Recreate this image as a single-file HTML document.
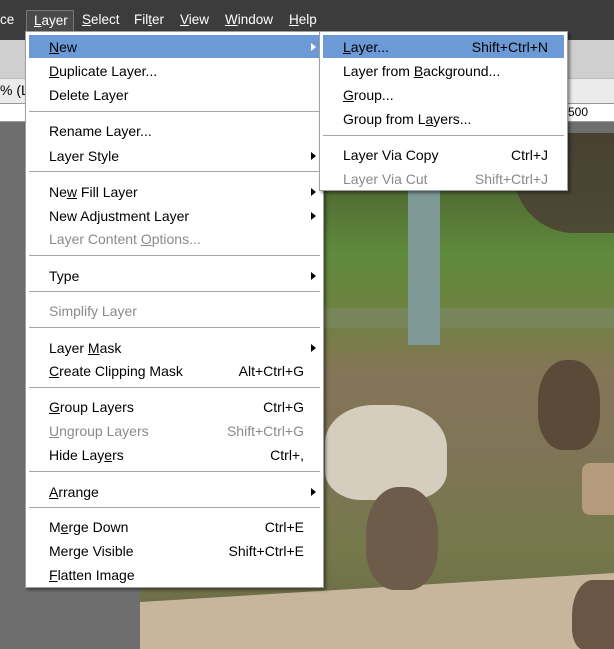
<!DOCTYPE html>
<html><head><meta charset="utf-8"><style>
*{margin:0;padding:0;box-sizing:border-box}
body{width:614px;height:649px;overflow:hidden;position:relative;background:#6e6e6e;font-family:"Liberation Sans",sans-serif;font-size:14px;color:#000}
.bar{position:absolute;left:0;top:0;width:614px;height:40px;background:#3c3c3c}
.bar span{position:absolute;top:12px;color:#fff;font-size:13.5px}
.bar .act{left:26px;top:10px;width:48px;height:23px;border:1px solid #777;border-bottom:none;background:#4a4a4a;padding:2px 0 0 7px}
u{text-decoration:underline}
.tool{position:absolute;left:0;top:40px;width:614px;height:38px;background:#cfcfcf}
.tool2{position:absolute;left:0;top:78px;width:614px;height:25px;background:#ebebeb;border-top:1px solid #bbb}
.ruler{position:absolute;left:0;top:103px;width:614px;height:19px;background:#fff;border-bottom:1px solid #999;border-top:1px solid #999}
.gap{position:absolute;left:0;top:122px;width:614px;height:11px;background:#6e6e6e}
.photo{position:absolute;left:140px;top:133px;width:474px;height:516px;overflow:hidden;
background:linear-gradient(180deg,#3e4a2c 0,#4f6a32 55px,#5f8a3c 120px,#6e8240 180px,#857558 240px,#7f7556 320px,#74784a 420px,#6e6e48 470px);}
.photo div{position:absolute}
.menu{position:absolute;background:#fff;border:1px solid #a0a0a0;box-shadow:2px 2px 3px rgba(0,0,0,.45)}
.it{position:absolute;left:3px;right:3px;height:23px;line-height:25px;padding-left:20px}
.it.hl{background:#6c9ad6}
.it.dis{color:#8a8a8a}
.it .sc{position:absolute;right:16px;top:0}
.it .ar{position:absolute;right:4px;top:8px;width:0;height:0;border-left:5px solid #000;border-top:4px solid transparent;border-bottom:4px solid transparent}
.it.hl .ar{border-left-color:#fff}
.sep{position:absolute;left:3px;right:3px;height:1px;background:#a5a5a5}
</style></head><body>
<div class="tool"></div><div class="tool2"><span style="position:absolute;left:0;top:3px;font-size:14px">% (L</span></div>
<div class="ruler"><span style="position:absolute;left:568px;top:1px;font-size:12px">500</span></div>
<div class="gap"></div>
<div class="photo">
<div style="left:374px;top:0;width:100px;height:100px;background:#4a4034;border-radius:0 0 0 60px;opacity:.85"></div>
<div style="left:0;top:175px;width:474px;height:20px;background:#7f8a70;opacity:.5"></div>
<div style="left:268px;top:57px;width:32px;height:155px;background:#7e9896"></div>
<div style="left:185px;top:272px;width:122px;height:95px;background:#d5cebf;border-radius:40% 45% 30% 30%"></div>
<div style="left:442px;top:330px;width:40px;height:52px;background:#b69a7c;border-radius:8px"></div>
<div style="left:398px;top:227px;width:62px;height:90px;background:#5c4a38;border-radius:45% 45% 40% 40%"></div>
<div style="left:0;top:0;width:474px;height:516px;background:#c7b59c;clip-path:polygon(0 469px,474px 440px,474px 516px,0 516px)"></div>
<div style="left:226px;top:354px;width:72px;height:103px;background:#6e5c4a;border-radius:45% 45% 40% 40%"></div>
<div style="left:432px;top:447px;width:42px;height:70px;background:#6a5644;border-radius:50% 0 0 30%"></div>
</div>
<div class="bar">
<span style="left:0">ce</span>
<span class="act"><u>L</u>ayer</span>
<span style="left:82px"><u>S</u>elect</span>
<span style="left:134px">Fil<u>t</u>er</span>
<span style="left:180px"><u>V</u>iew</span>
<span style="left:225px"><u>W</u>indow</span>
<span style="left:289px"><u>H</u>elp</span>
</div>

<div class="menu" style="left:25px;top:31px;width:299px;height:557px">
<div class="it hl" style="top:3px"><u>N</u>ew<i class="ar"></i></div>
<div class="it" style="top:27px"><u>D</u>uplicate Layer...</div>
<div class="it" style="top:51px">Delete Layer</div>
<div class="sep" style="top:79px"></div>
<div class="it" style="top:87px">Rename Layer...</div>
<div class="it" style="top:112px">Layer Style<i class="ar"></i></div>
<div class="sep" style="top:139px"></div>
<div class="it" style="top:148px">Ne<u>w</u> Fill Layer<i class="ar"></i></div>
<div class="it" style="top:172px">New Adjustment Layer<i class="ar"></i></div>
<div class="it dis" style="top:195px">Layer Content <u>O</u>ptions...</div>
<div class="sep" style="top:223px"></div>
<div class="it" style="top:232px">Type<i class="ar"></i></div>
<div class="sep" style="top:259px"></div>
<div class="it dis" style="top:267px">Simplify Layer</div>
<div class="sep" style="top:295px"></div>
<div class="it" style="top:304px">Layer <u>M</u>ask<i class="ar"></i></div>
<div class="it" style="top:327px"><u>C</u>reate Clipping Mask<span class="sc">Alt+Ctrl+G</span></div>
<div class="sep" style="top:355px"></div>
<div class="it" style="top:363px"><u>G</u>roup Layers<span class="sc">Ctrl+G</span></div>
<div class="it dis" style="top:387px"><u>U</u>ngroup Layers<span class="sc">Shift+Ctrl+G</span></div>
<div class="it" style="top:411px">Hide Lay<u>e</u>rs<span class="sc">Ctrl+,</span></div>
<div class="sep" style="top:439px"></div>
<div class="it" style="top:448px"><u>A</u>rrange<i class="ar"></i></div>
<div class="sep" style="top:475px"></div>
<div class="it" style="top:483px">M<u>e</u>rge Down<span class="sc">Ctrl+E</span></div>
<div class="it" style="top:507px">Merge Visible<span class="sc">Shift+Ctrl+E</span></div>
<div class="it" style="top:531px"><u>F</u>latten Image</div>
</div>

<div class="menu" style="left:319px;top:31px;width:249px;height:160px">
<div class="it hl" style="top:3px"><u>L</u>ayer...<span class="sc">Shift+Ctrl+N</span></div>
<div class="it" style="top:27px">Layer from <u>B</u>ackground...</div>
<div class="it" style="top:51px"><u>G</u>roup...</div>
<div class="it" style="top:75px">Group from L<u>a</u>yers...</div>
<div class="sep" style="top:103px"></div>
<div class="it" style="top:111px">Layer Via Copy<span class="sc">Ctrl+J</span></div>
<div class="it dis" style="top:135px">Layer Via Cut<span class="sc">Shift+Ctrl+J</span></div>
</div>
</body></html>
